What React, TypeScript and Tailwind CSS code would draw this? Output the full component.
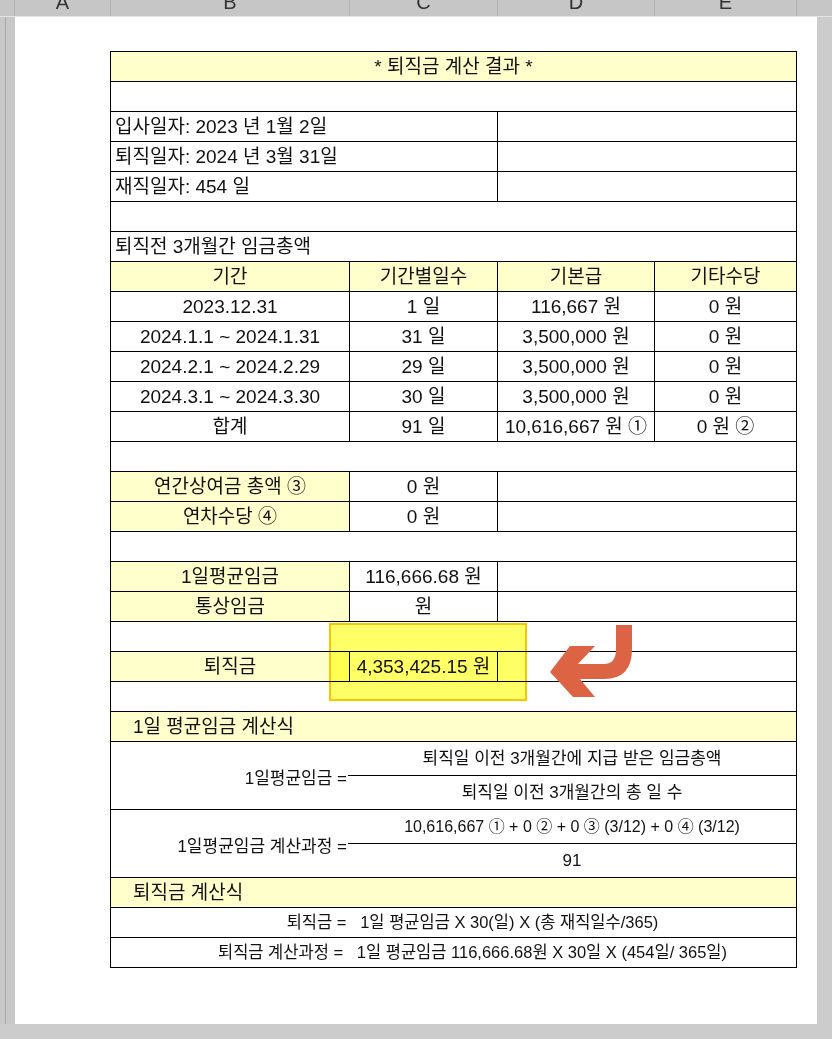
import React from "react";

// 퇴직금 계산 결과 시트 (엑셀 화면 재현)
const base = "h-[30px] border-r border-b border-black flex items-center leading-none whitespace-nowrap";
const cell = `${base} text-[19px]`;
const small = `${base} text-[16.5px]`;
const yellow = "bg-[#ffffcc]";

const periods = [
  ["2023.12.31", "1 일", "116,667 원", "0 원"],
  ["2024.1.1 ~ 2024.1.31", "31 일", "3,500,000 원", "0 원"],
  ["2024.2.1 ~ 2024.2.29", "29 일", "3,500,000 원", "0 원"],
  ["2024.3.1 ~ 2024.3.30", "30 일", "3,500,000 원", "0 원"],
  ["합계", "91 일", "10,616,667 원 ①", "0 원 ②"],
];

function Formula({ label, top, bottom, topSize }: { label: string; top: string; bottom: string; topSize: string }) {
  return (
    <div className="col-span-4 h-[68px] border-r border-b border-black flex text-[17px] leading-none whitespace-nowrap">
      <div className="w-[237px] flex items-center justify-end pt-[5px] pr-[1px]">{label}</div>
      <div className="flex-1 flex flex-col">
        <div className={`h-[33px] flex items-center justify-center ${topSize}`}>{top}</div>
        <div className="flex-1 border-t border-black flex items-center justify-center">{bottom}</div>
      </div>
    </div>
  );
}

function ColHeader() {
  const cols = [
    { w: "w-[96px]", l: "A" },
    { w: "w-[239px]", l: "B" },
    { w: "w-[148px]", l: "C" },
    { w: "w-[157px]", l: "D" },
    { w: "w-[142px]", l: "E" },
  ];
  return (
    <div className="h-[17px] flex bg-[#c6c6c6] border-b border-[#e4e4e4] overflow-hidden text-[#333]">
      <div className="w-[15px] border-r border-[#b0b0b0]" />
      {cols.map((c) => (
        <div key={c.l} className={`${c.w} border-r border-[#b0b0b0] flex justify-center`}>
          <span className="text-[20px] leading-[20px] -mt-[8px]">{c.l}</span>
        </div>
      ))}
      <div className="flex-1" />
    </div>
  );
}

export default function App() {
  return (
    <div className="w-[832px] h-[1039px] bg-[#cccccc] overflow-hidden font-['Liberation_Sans','Noto_Sans_CJK_KR',sans-serif] text-[#111]">
      <ColHeader />
      <div className="flex">
        <div className="w-[15px] h-[1007px] bg-[#c8c8c8] flex">
          <div className="w-[6px] border-r border-[#a8a8a8]" />
        </div>
        <div className="w-[802px] h-[1007px] bg-white pt-[34px] pl-[95px]">
          <div className="relative w-[687px]">
            <div className="grid grid-cols-[239px_148px_157px_142px] border-l border-t border-black">
              <div className={`${cell} ${yellow} col-span-4 justify-center`}>* 퇴직금 계산 결과 *</div>
              <div className={`${cell} col-span-4`} />
              <div className={`${cell} col-span-2 pl-[4px]`}>입사일자: 2023 년 1월 2일</div>
              <div className={`${cell} col-span-2`} />
              <div className={`${cell} col-span-2 pl-[4px]`}>퇴직일자: 2024 년 3월 31일</div>
              <div className={`${cell} col-span-2`} />
              <div className={`${cell} col-span-2 pl-[4px]`}>재직일자: 454 일</div>
              <div className={`${cell} col-span-2`} />
              <div className={`${cell} col-span-4`} />
              <div className={`${cell} col-span-4 pl-[4px]`}>퇴직전 3개월간 임금총액</div>

              {["기간", "기간별일수", "기본급", "기타수당"].map((h) => (
                <div key={h} className={`${cell} ${yellow} justify-center`}>{h}</div>
              ))}
              {periods.map((row, i) =>
                row.map((v, j) => (
                  <div key={`${i}-${j}`} className={`${cell} justify-center`}>{v}</div>
                ))
              )}

              <div className={`${cell} col-span-4`} />
              <div className={`${cell} ${yellow} justify-center`}>연간상여금 총액 ③</div>
              <div className={`${cell} justify-center`}>0 원</div>
              <div className={`${cell} col-span-2`} />
              <div className={`${cell} ${yellow} justify-center`}>연차수당 ④</div>
              <div className={`${cell} justify-center`}>0 원</div>
              <div className={`${cell} col-span-2`} />

              <div className={`${cell} col-span-4`} />
              <div className={`${cell} ${yellow} justify-center`}>1일평균임금</div>
              <div className={`${cell} justify-center`}>116,666.68 원</div>
              <div className={`${cell} col-span-2`} />
              <div className={`${cell} ${yellow} justify-center`}>통상임금</div>
              <div className={`${cell} justify-center`}>원</div>
              <div className={`${cell} col-span-2`} />

              <div className={`${cell} col-span-4`} />
              <div className={`${cell} ${yellow} justify-center`}>퇴직금</div>
              <div className={`${cell} justify-center`}>4,353,425.15 원</div>
              <div className={`${cell} col-span-2`} />
              <div className={`${cell} col-span-4`} />

              <div className={`${cell} ${yellow} col-span-4 pl-[22px]`}>1일 평균임금 계산식</div>
              <Formula
                label="1일평균임금 ="
                top="퇴직일 이전 3개월간에 지급 받은 임금총액"
                bottom="퇴직일 이전 3개월간의 총 일 수"
                topSize="text-[17px]"
              />
              <Formula
                label="1일평균임금 계산과정 ="
                top="10,616,667 ① + 0 ② + 0 ③ (3/12) + 0 ④ (3/12)"
                bottom="91"
                topSize="text-[16px]"
              />
              <div className={`${cell} ${yellow} col-span-4 pl-[22px]`}>퇴직금 계산식</div>
              <div className={`${small} col-span-4 justify-center pl-[38px]`}>
                퇴직금 =&nbsp;&nbsp; 1일 평균임금 X 30(일) X (총 재직일수/365)
              </div>
              <div className={`${small} col-span-4 justify-center pl-[38px]`}>
                퇴직금 계산과정 =&nbsp;&nbsp; 1일 평균임금 116,666.68원 X 30일 X (454일/ 365일)
              </div>
            </div>

            {/* 강조 박스 */}
            <div className="absolute left-[219px] top-[572px] w-[198px] h-[78px] bg-[#ffff66] border-2 border-[#f7c600] mix-blend-multiply" />

            {/* 화살표 */}
            <svg className="absolute left-[420px] top-[564px]" width="110" height="90" viewBox="0 0 110 90">
              <path
                d="M86 10 L102 10 L102 34 Q102 64 74 64 L50 64 L65 82 L43 82 L20 57 L40 31 L65 31 L48 49 L74 49 Q86 49 86 34 Z"
                fill="#dc6444"
              />
            </svg>
          </div>
        </div>
        <div className="flex-1 h-[1007px] bg-[#cccccc]" />
      </div>
    </div>
  );
}
